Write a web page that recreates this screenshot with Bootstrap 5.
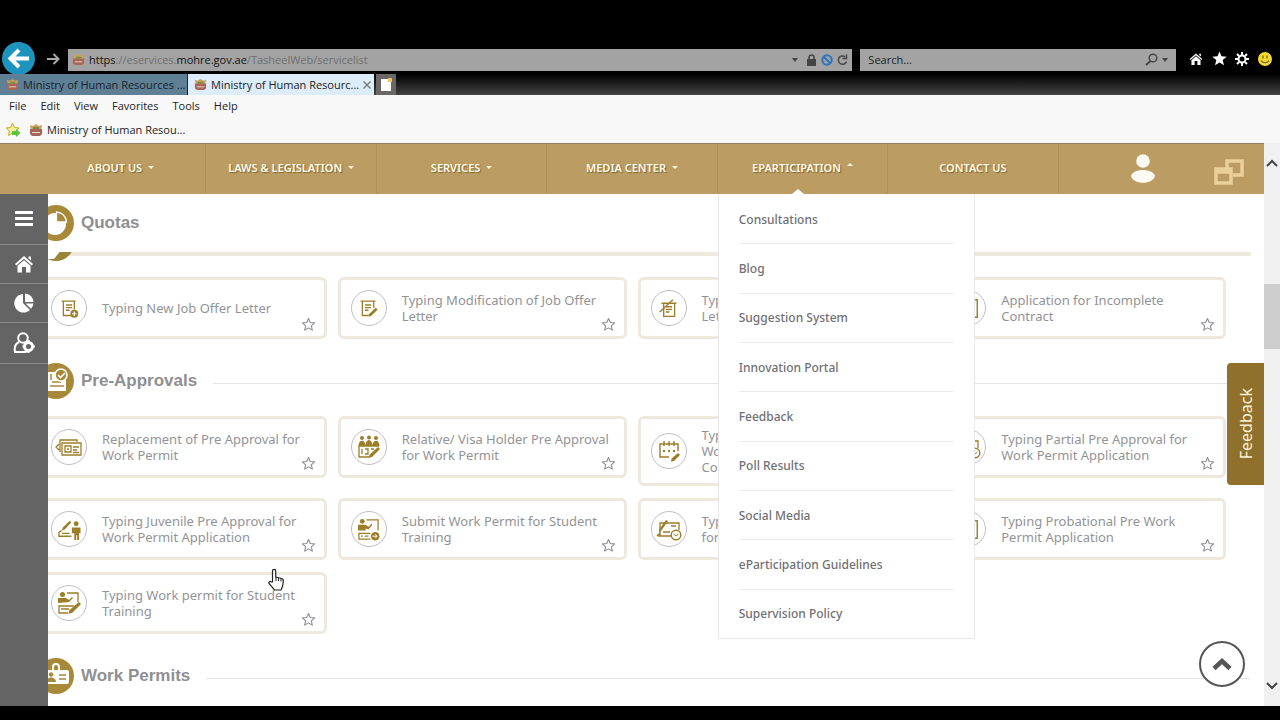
<!DOCTYPE html>
<html lang="en">
<head>
<meta charset="utf-8">
<meta name="viewport" content="width=device-width, initial-scale=1">
<title>Ministry of Human Resources - Service list</title>
<link rel="stylesheet" href="https://cdn.jsdelivr.net/npm/bootstrap@5.3.0/dist/css/bootstrap.min.css">
<script src="https://cdn.jsdelivr.net/npm/bootstrap@5.3.0/dist/js/bootstrap.bundle.min.js"></script>
<style>
  :root { --gold: #bb9c63; --deep: #8f702c; --icon: #9c7d28; --line: #eee8dd; }
  body { background: #000; font-family: "Noto Sans", sans-serif; font-size: 13px; padding: 43px 0 14px; }
  a { text-decoration: none; color: inherit; }
  button { font: inherit; color: inherit; background: none; border: 0; padding: 0; }
  svg { flex: none; display: block; }

  /* browser frame */
  .chrome { font-family: "Open Sans", sans-serif; font-size: 11px; line-height: 16px; }
  .addr-row { height: 31px; padding-left: 2px; }
  .field { background: #a3a3a3; color: #6f6f6f; height: 22px; margin-top: 2px; }
  .field b { color: #111; font-weight: 400; }
  .field-find { width: 24.7%; flex: none; }
  .field input { background: none; border: 0; outline: 0; color: #222; min-width: 0; }
  .field input::placeholder { color: #222; opacity: 1; }
  .tools { width: 104px; padding: 0 8px 0 13px; color: #fff; flex: none; }
  .tab-row { height: 21px; background: linear-gradient(#000, #444); }
  .b-tab { width: 187px; padding: 0 6px; background: #5f7f94; color: #14222e; }
  .b-tab.current { background: #dcecf9; color: #222; }
  .new-tab { width: 20px; background: #6b6767; margin-left: 2px; }
  .menu-row { height: 22px; padding-left: 9px; gap: 14px; }
  .fav-row { height: 26px; padding-left: 5px; gap: 8px; }
  .light { background: #f8f8f8; color: #222; }

  /* site bar */
  .site-bar { background: var(--gold); border-top: 1px solid #8d8064; height: 51px; padding-left: 36px; z-index: 5; }
  .site-item { flex: 0 0 13.88%; border-right: 1px solid #b0915a; position: relative; }
  .site-link { color: #fffbe9; font-size: 11px; font-weight: 600; line-height: 16px; text-shadow: 1px 1px 1px #7d6434; gap: 6px; height: 48px; }
  .site-tools { padding: 6px 20px 0 0; gap: 59px; }
  .tri { border: 3px solid transparent; border-width: 3px 3px 0; border-top-color: #fff3cf; margin-bottom: 2px; }
  .tri.up { border-width: 0 3px 3px; border-top-color: transparent; border-bottom-color: #fff3cf; margin-bottom: 7px; }
  .mega { position: absolute; top: 100%; left: 0; width: 257px; height: 445px; background: #fff; padding: 1px 20px 0; border: 1px solid #e8e8e8; border-top: 0; }
  .mega::before { content: ""; position: absolute; left: 73px; top: -5px; border: 6px solid transparent; border-width: 0 6px 5px; border-bottom-color: #fff; }
  .mega a { flex: 1 1 0; padding-top: 1px; border-bottom: 1px solid #ececec; color: #707074; font-size: 12px; font-weight: 500; }
  .mega a:last-child { border: 0; }

  /* left rail */
  .rail { flex: 0 0 48px; background: #646464; color: #fff; z-index: 3; }
  .rail button { height: 39px; border-bottom: 1px solid #8c8c8c; }
  .rail button:first-child { height: 51px; }
  .rail button:last-child { height: 41px; }

  /* services */
  .services { margin-left: -10px; min-width: 0; background: #fff; }
  .pinned { height: 62px; background: #fff; border-bottom: 4px solid var(--line); margin: 0 13px 21px 0; }
  .pinned-in { height: 57px; gap: 7px; }
  .sec-title { font: bold 17px/24px "Liberation Sans", sans-serif; color: #8f8f92; margin: 0; }
  .sec-head { height: 36px; margin: 24px 14px 17px 0; gap: 7px; }
  .sec-head hr { margin: 4px 0 0 9px; border-color: #e4e4e4; }
  .tiles { display: grid; grid-template-columns: repeat(4, 1fr); gap: 12px 11px; align-items: start; margin-right: 38px; }
  .tile { position: relative; min-height: 62px; border: 3px solid var(--line); border-radius: 6px; padding: 8px 8px 8px 10px; gap: 15px; line-height: 16px; color: #939397; }
  .ring { width: 36px; height: 36px; border: 1px solid #bfbcc8; border-radius: 50%; color: var(--icon); flex: none; }
  .star { position: absolute; right: 8px; bottom: 4px; color: #8e8e96; }
  .badge-peek { position: absolute; left: 0; top: 58px; width: 36px; height: 9px; overflow: hidden; }

  .feedback { position: absolute; right: 0; top: 169px; width: 37px; height: 122px; background: var(--deep); color: #fbf0d4; border-radius: 4px 0 0 4px; font-size: 16px; }
  .feedback span { writing-mode: vertical-rl; transform: rotate(180deg); }
  .to-top { position: absolute; right: 19px; bottom: 19px; width: 46px; height: 46px; border: 2px solid #555; border-radius: 50%; background: #fff; color: #555; }
  .pointer { position: absolute; left: 267px; top: 374px; z-index: 4; }
  .scroll-track { flex: 0 0 16px; background: #f0f0f0; color: #444; padding: 16px 0; }
  .scroll-thumb { height: 65px; background: #cdcdcd; margin-top: 117px; }
</style>
</head>
<body class="d-flex flex-column min-vh-100">

<svg width="0" height="0" class="position-absolute" aria-hidden="true">
  <defs>
    <symbol id="crest" viewBox="0 0 14 14"><path d="M1 2l3 1 3-2 3 2 3-1-1 5H2z" fill="#c9a05a"/><path d="M1 6h12v5l-2 2H3l-2-2z" fill="#a8665a"/><path d="M4 4h6v2H4z" fill="#7c8a4e"/><path d="M3 9h8v1H3z" fill="#e9d9c9"/></symbol>
    <symbol id="star" viewBox="0 0 16 16"><path d="M8 1.600l1.900 4.300 4.600.4-3.500 3.100 1.100 4.600L8 11.600 3.900 14l1.100-4.600L1.500 6.300l4.600-.4z" fill="none" stroke="currentColor" stroke-width="1.200" stroke-linejoin="round"/></symbol>
    <symbol id="home" viewBox="0 0 20 18"><path d="M10 1l9 8-1.300 1.400L10 3.700l-7.700 6.700L1 9zM14.500 1.500H17v4l-2.500-2.200zM10 5.200l6.500 5.600V17.500H12V12H8v5.500H3.500v-6.700z" fill="currentColor"/></symbol>
    <symbol id="doc-add" viewBox="0 0 24 24"><path d="M3 3.500h16M5 3.500V20h9M17.500 3.500V13M8 8h7M8 11h7M8 14h4" fill="none" stroke="currentColor" stroke-width="1.500"/><circle cx="17.500" cy="18" r="4.500" fill="currentColor"/><path d="M17.500 15.500v5M15 18h5" stroke="#fff" stroke-width="1.400"/></symbol>
    <symbol id="doc-edit" viewBox="0 0 24 24"><path d="M3 3.500h17M5 3.500V20h7M18 3.500V11M8 8h7M8 11h7M8 14h4" fill="none" stroke="currentColor" stroke-width="1.500"/><path d="M20 11l2.500 2.200-7.500 7.500-3 .8.500-3z" fill="currentColor"/></symbol>
    <symbol id="doc-off" viewBox="0 0 24 24"><path d="M4 6h17M6.500 6v15H19V6M9 10h7M9 13h7M9 16h4" fill="none" stroke="currentColor" stroke-width="1.500"/><path d="M2 16L17 2" stroke="currentColor" stroke-width="1.500"/></symbol>
    <symbol id="cards" viewBox="0 0 28 24"><path d="M5 17V5h17v2M7 8h19v12H7zM10 11h6v6h-6zM12 14h2M18 12h6M18 15h4M18 17.500h6M4 9l-3 3 3 3" fill="none" stroke="currentColor" stroke-width="1.300"/></symbol>
    <symbol id="family" viewBox="0 0 24 24"><g fill="currentColor"><circle cx="5" cy="3" r="2"/><circle cx="12" cy="2.500" r="2"/><circle cx="19" cy="3" r="2"/><path d="M1.500 11c0-7 7-7 7 0zM8.500 11c0-8 7-8 7 0zM15.500 11c0-7 7-7 7 0zM21 12l2 2-8 8-3 .5.600-3z"/></g><path d="M13 22H2V11h20M5 14v5M8 14h3v5H8M14 14h3" fill="none" stroke="currentColor" stroke-width="1.300"/></symbol>
    <symbol id="calendar" viewBox="0 0 24 24"><path d="M12 18H3V5h18v7M7 2v5M12 2v5M17 2v5" fill="none" stroke="currentColor" stroke-width="1.400"/><path d="M6 11h2v2H6zM11 11h2v2h-2zM16 11h2v2h-2zM21 14l2 2-6 6-3 .6.600-3z" fill="currentColor"/></symbol>
    <symbol id="juvenile" viewBox="0 0 24 24"><g fill="currentColor"><circle cx="19" cy="6" r="2.500"/><path d="M14.500 10h9v6H22v7h-2v-5h-1v5h-2v-7h-2.500zM12 3l2 1.500L7 12l-3 1 1-3z"/></g><path d="M4 13L1 15v4h13M4 16h8" fill="none" stroke="currentColor" stroke-width="1.400"/></symbol>
    <symbol id="training" viewBox="0 0 24 24"><g fill="currentColor"><circle cx="5.500" cy="3.500" r="2.500"/><path d="M1 13V7h8l3 2 3-3 1 1-4 5-3-1v2z"/><circle cx="19" cy="19" r="4.500"/></g><path d="M10 2h12v11M14 22H2v-6h12M4 19h2M8 19h4" fill="none" stroke="currentColor" stroke-width="1.300"/><path d="M16 19h5M19 17l2 2-2 2" fill="none" stroke="#fff"/></symbol>
    <symbol id="time-card" viewBox="0 0 26 24"><path d="M16 19H4V6h19v7M7 15h7M15 9h5M2 19h14M1 19l3-3" fill="none" stroke="currentColor" stroke-width="1.300"/><path d="M10 3l2 1-7 10-2 1v-2.500z" fill="currentColor"/><circle cx="20" cy="18" r="4.800" fill="#fff" stroke="currentColor" stroke-width="1.400"/><path d="M17.500 17l2.500 2 2.500-2" fill="none" stroke="currentColor"/></symbol>
    <symbol id="train-edit" viewBox="0 0 24 24"><g fill="currentColor"><circle cx="5.500" cy="3.500" r="2.500"/><path d="M1 12V7h8l3 2 3-3 1 1-4 4zM22 11l2 2-9 9-3.500.7.700-3.500z"/></g><path d="M10 2h11v9M11 22H2v-7h15M4 18h8" fill="none" stroke="currentColor" stroke-width="1.300"/></symbol>
    <symbol id="contract" viewBox="0 0 24 24"><path d="M4 2h18v20H4zM8 8h8M8 12h8" fill="none" stroke="currentColor" stroke-width="1.600"/></symbol>
  </defs>
</svg>

<header class="chrome">
  <div class="addr-row d-flex align-items-center">
    <button aria-label="Back"><svg width="33" height="33" viewBox="0 0 33 33"><circle cx="16.500" cy="16.500" r="16.500" fill="#1e93bd"/><path d="M17 8l-8.500 8.500L17 25M9 16.500h18" fill="none" stroke="#fff" stroke-width="4"/></svg></button>
    <button aria-label="Forward" class="ms-2 ps-1"><svg width="13" height="12" viewBox="0 0 13 12"><path d="M0 6h11M6.500 1l5 5-5 5" fill="none" stroke="#aaa" stroke-width="2"/></svg></button>
    <div class="field flex-fill d-flex align-items-center ms-2 me-2 ps-1 pe-1">
      <svg width="13" height="13" class="me-1"><use href="#crest"/></svg>
      <div class="flex-fill" role="textbox" aria-label="Address" contenteditable="true"><b>https</b>://eservices.<b>mohre.gov.ae</b>/TasheelWeb/servicelist</div>
      <div class="d-flex align-items-center gap-1">
        <svg width="6" height="4" class="me-1"><path d="M0 0h6L3 4z" fill="#444"/></svg>
        <svg width="11" height="12" viewBox="0 0 11 12"><path d="M1 5h9v7H1z" fill="#444"/><path d="M3 6V3.500a2.500 2.500 0 015 0V6" fill="none" stroke="#444" stroke-width="1.500"/></svg>
        <svg width="12" height="12" viewBox="0 0 12 12"><circle cx="6" cy="6" r="4.700" fill="none" stroke="#2e74bd" stroke-width="2"/><path d="M3 3l6 6" stroke="#2e74bd" stroke-width="2"/></svg>
        <svg width="11" height="12" viewBox="0 0 11 12"><path d="M9.500 7.500A4.200 4.200 0 118 2.700M5.500 4.500h4v-4" fill="none" stroke="#444" stroke-width="1.500"/></svg>
      </div>
    </div>
    <label class="field field-find d-flex align-items-center ps-2 pe-2">
      <input class="flex-fill p-0" type="search" placeholder="Search..." aria-label="Search">
      <svg width="13" height="13" viewBox="0 0 13 13"><circle cx="8" cy="5" r="3.800" fill="none" stroke="#444" stroke-width="1.400"/><path d="M5.500 8L1 12" stroke="#444" stroke-width="1.800"/></svg>
      <svg width="6" height="4" class="ms-1"><path d="M0 0h6L3 4z" fill="#444"/></svg>
    </label>
    <div class="tools d-flex align-items-center justify-content-between">
      <button aria-label="Home"><svg width="14" height="14"><use href="#home"/></svg></button>
      <button aria-label="Favorites"><svg width="15" height="15" viewBox="0 0 16 16"><path d="M8 .5l2.100 5.200 5.600.4-4.300 3.600 1.400 5.500L8 12.200l-4.800 3 1.400-5.500L.3 6.100l5.600-.4z" fill="#fff"/></svg></button>
      <button aria-label="Settings"><svg width="14" height="14" viewBox="0 0 14 14"><circle cx="7" cy="7" r="3.500" fill="none" stroke="#fff" stroke-width="2"/><g stroke="#fff" stroke-width="2"><path d="M7 0v3M7 11v3M0 7h3M11 7h3M2 2l2 2M10 10l2 2M12 2l-2 2M4 10l-2 2"/></g></svg></button>
      <button aria-label="Smile"><svg width="14" height="14" viewBox="0 0 14 14"><circle cx="7" cy="7" r="7" fill="#f3d92d"/><path d="M5 3.500v3M9 3.500v3M3 8.500c2 3 6 3 8 0" fill="none" stroke="#6a5a10" stroke-width="1.200"/></svg></button>
    </div>
  </div>

  <div class="tab-row d-flex">
    <button class="b-tab d-flex align-items-center gap-1"><svg width="13" height="13"><use href="#crest"/></svg><span class="text-nowrap">Ministry of Human Resources ...</span></button>
    <button class="b-tab current d-flex align-items-center gap-1 border-start border-dark"><svg width="13" height="13"><use href="#crest"/></svg><span class="text-nowrap">Ministry of Human Resourc...</span>
      <svg width="8" height="8" viewBox="0 0 8 8" class="ms-auto"><path d="M.5.500l7 7M7.500.500l-7 7" stroke="#777" stroke-width="1.400"/></svg></button>
    <button class="new-tab d-flex align-items-center justify-content-center" aria-label="New tab"><svg width="14" height="15" viewBox="0 0 14 15"><path d="M2 2h7l3 3v9H2z" fill="#fff"/><path d="M9 1h4v4H9z" fill="#e9c35c"/></svg></button>
  </div>

  <nav class="menu-row light d-flex align-items-center" aria-label="Browser menu">
    <a href="#">File</a><a href="#">Edit</a><a href="#">View</a><a href="#">Favorites</a><a href="#">Tools</a><a href="#">Help</a>
  </nav>
  <div class="fav-row light d-flex align-items-center">
    <svg width="16" height="16" viewBox="0 0 16 16"><path d="M7.500 1l2 4.500 4.500.5-3.500 3 1 4.500-4-2.500-4 2.500 1-4.500L1 6l4.500-.5z" fill="#f6ee9a" stroke="#c5ac25"/><path d="M7 9h4V7l4.500 4L11 15v-2H7z" fill="#5cc33c"/></svg>
    <a href="#" class="d-flex align-items-center gap-1"><svg width="14" height="14"><use href="#crest"/></svg>Ministry of Human Resou...</a>
  </div>
</header>

<div class="d-flex flex-fill bg-white">
  <div class="flex-fill d-flex flex-column position-relative overflow-hidden">
    <nav class="site-bar d-flex position-relative" aria-label="Main">
      <div class="site-item"><a href="#" class="site-link d-flex align-items-center justify-content-center">ABOUT US <span class="tri"></span></a></div>
      <div class="site-item"><a href="#" class="site-link d-flex align-items-center justify-content-center">LAWS &amp; LEGISLATION <span class="tri"></span></a></div>
      <div class="site-item"><a href="#" class="site-link d-flex align-items-center justify-content-center">SERVICES <span class="tri"></span></a></div>
      <div class="site-item"><a href="#" class="site-link d-flex align-items-center justify-content-center">MEDIA CENTER <span class="tri"></span></a></div>
      <div class="site-item"><a href="#" class="site-link d-flex align-items-center justify-content-center" aria-expanded="true">EPARTICIPATION <span class="tri up"></span></a>
        <div class="mega d-flex flex-column">
          <a href="#" class="d-flex align-items-center">Consultations</a>
          <a href="#" class="d-flex align-items-center">Blog</a>
          <a href="#" class="d-flex align-items-center">Suggestion System</a>
          <a href="#" class="d-flex align-items-center">Innovation Portal</a>
          <a href="#" class="d-flex align-items-center">Feedback</a>
          <a href="#" class="d-flex align-items-center">Poll Results</a>
          <a href="#" class="d-flex align-items-center">Social Media</a>
          <a href="#" class="d-flex align-items-center">eParticipation Guidelines</a>
          <a href="#" class="d-flex align-items-center">Supervision Policy</a>
        </div>
      </div>
      <div class="site-item"><a href="#" class="site-link d-flex align-items-center justify-content-center">CONTACT US</a></div>
      <div class="site-tools flex-fill d-flex align-items-center justify-content-end">
        <button class="pb-2" aria-label="Account"><svg width="24" height="29" viewBox="0 0 24 29"><circle cx="12" cy="7" r="6.800" fill="#fdfaf3"/><path d="M0 22c2-8 22-8 24 0-2 9-22 9-24 0z" fill="#fdfaf3"/></svg></button>
        <button aria-label="Windows"><svg width="30" height="27" viewBox="0 0 30 27"><path d="M13 9V2h15v14h-9" fill="none" stroke="#ecd09a" stroke-width="3.500"/><path d="M2 10h15v14H2zM2 13h15" fill="none" stroke="#ecd09a" stroke-width="3.500"/></svg></button>
      </div>
    </nav>

    <div class="d-flex flex-fill position-relative">
      <aside class="rail d-flex flex-column">
        <button class="d-flex align-items-center justify-content-center" aria-label="Menu"><svg width="18" height="16"><path d="M0 0h18v3H0zM0 6h18v3H0zM0 12h18v3H0z" fill="#fff"/></svg></button>
        <button class="d-flex align-items-center justify-content-center" aria-label="Home"><svg width="20" height="18"><use href="#home"/></svg></button>
        <button class="d-flex align-items-center justify-content-center" aria-label="Reports"><svg width="20" height="20" viewBox="0 0 20 20"><path d="M9 1v9l7 7A9.300 9.300 0 119 1z" fill="#fff"/><path d="M11 .5a9 9 0 018.500 8.500H11zM11.500 10.500h8a9 9 0 01-2.500 5.200z" fill="#fff"/></svg></button>
        <button class="d-flex align-items-center justify-content-center" aria-label="Account settings"><svg width="22" height="22" viewBox="0 0 22 22"><circle cx="10" cy="6" r="4.800" fill="none" stroke="#fff" stroke-width="2"/><path d="M6 10c-4 2-5 5-4 10h10l4-1" fill="none" stroke="#fff" stroke-width="2"/><circle cx="15.500" cy="14.500" r="4" fill="none" stroke="#fff" stroke-width="3"/><path d="M15.500 8v3M15.500 18v3M9.500 14.500h3M19 14.500h3" stroke="#fff" stroke-width="2"/></svg></button>
      </aside>

      <main class="services flex-fill">
        <div class="pinned position-relative">
          <div class="pinned-in d-flex align-items-center">
            <svg width="36" height="36" viewBox="0 0 36 36"><circle cx="18" cy="18" r="18" fill="#a8893a"/><circle cx="17" cy="19" r="11" fill="#fff"/><path d="M18.500 7v10h10A10.500 10.500 0 0018.500 7z" fill="#a8893a" stroke="#fff" stroke-width="1.300"/></svg>
            <h2 class="sec-title">Quotas</h2>
          </div>
          <div class="badge-peek"><svg width="36" height="9" viewBox="0 27 36 9"><circle cx="18" cy="18" r="18" fill="#97863a"/><path d="M0 24h24l-8 10H0z" fill="#fff"/></svg></div>
        </div>

        <div class="tiles">
          <a href="#" class="tile d-flex align-items-center"><span class="ring d-flex align-items-center justify-content-center"><svg width="21" height="21"><use href="#doc-add"/></svg></span><span>Typing New Job Offer Letter</span><svg class="star" width="15" height="15"><use href="#star"/></svg></a>
          <a href="#" class="tile d-flex align-items-center"><span class="ring d-flex align-items-center justify-content-center"><svg width="21" height="21"><use href="#doc-edit"/></svg></span><span>Typing Modification of Job Offer Letter</span><svg class="star" width="15" height="15"><use href="#star"/></svg></a>
          <a href="#" class="tile d-flex align-items-center"><span class="ring d-flex align-items-center justify-content-center"><svg width="21" height="21"><use href="#doc-off"/></svg></span><span>Type<br>Let</span><svg class="star" width="15" height="15"><use href="#star"/></svg></a>
          <a href="#" class="tile d-flex align-items-center"><span class="ring d-flex align-items-center justify-content-center"><svg width="21" height="21"><use href="#contract"/></svg></span><span>Application for Incomplete<br>Contract</span><svg class="star" width="15" height="15"><use href="#star"/></svg></a>
        </div>

        <div class="sec-head d-flex align-items-center">
          <svg width="36" height="36" viewBox="0 0 36 36"><circle cx="18" cy="18" r="18" fill="#a8893a"/><path d="M8 9h11v6h9v13H8z" fill="#fff"/><path d="M14 19h9M12 23h14M13 11v6" stroke="#a8893a" stroke-width="1.500"/><circle cx="23" cy="12" r="6" fill="#a8893a" stroke="#fff" stroke-width="1.600"/><path d="M20 12l2.500 2.500L27 10" fill="none" stroke="#fff" stroke-width="1.600"/></svg>
          <h2 class="sec-title">Pre-Approvals</h2><hr class="flex-fill opacity-100">
        </div>

        <div class="tiles">
          <a href="#" class="tile d-flex align-items-center"><span class="ring d-flex align-items-center justify-content-center"><svg width="28" height="24"><use href="#cards"/></svg></span><span>Replacement of Pre Approval for Work Permit</span><svg class="star" width="15" height="15"><use href="#star"/></svg></a>
          <a href="#" class="tile d-flex align-items-center"><span class="ring d-flex align-items-center justify-content-center"><svg width="24" height="24"><use href="#family"/></svg></span><span>Relative/ Visa Holder Pre Approval for Work Permit</span><svg class="star" width="15" height="15"><use href="#star"/></svg></a>
          <a href="#" class="tile d-flex align-items-center"><span class="ring d-flex align-items-center justify-content-center"><svg width="24" height="24"><use href="#calendar"/></svg></span><span>Type<br>Work<br>Con</span><svg class="star" width="15" height="15"><use href="#star"/></svg></a>
          <a href="#" class="tile d-flex align-items-center"><span class="ring d-flex align-items-center justify-content-center"><svg width="26" height="24"><use href="#time-card"/></svg></span><span>Typing Partial Pre Approval for Work Permit Application</span><svg class="star" width="15" height="15"><use href="#star"/></svg></a>
          <a href="#" class="tile d-flex align-items-center"><span class="ring d-flex align-items-center justify-content-center"><svg width="23" height="23"><use href="#juvenile"/></svg></span><span>Typing Juvenile Pre Approval for Work Permit Application</span><svg class="star" width="15" height="15"><use href="#star"/></svg></a>
          <a href="#" class="tile d-flex align-items-center"><span class="ring d-flex align-items-center justify-content-center"><svg width="23" height="23"><use href="#training"/></svg></span><span>Submit Work Permit for Student Training</span><svg class="star" width="15" height="15"><use href="#star"/></svg></a>
          <a href="#" class="tile d-flex align-items-center"><span class="ring d-flex align-items-center justify-content-center"><svg width="28" height="24"><use href="#time-card"/></svg></span><span>Type<br>for</span><svg class="star" width="15" height="15"><use href="#star"/></svg></a>
          <a href="#" class="tile d-flex align-items-center"><span class="ring d-flex align-items-center justify-content-center"><svg width="21" height="21"><use href="#contract"/></svg></span><span>Typing Probational Pre Work<br>Permit Application</span><svg class="star" width="15" height="15"><use href="#star"/></svg></a>
          <a href="#" class="tile d-flex align-items-center"><span class="ring d-flex align-items-center justify-content-center"><svg width="24" height="24"><use href="#train-edit"/></svg></span><span>Typing Work permit for Student Training</span><svg class="star" width="15" height="15"><use href="#star"/></svg></a>
        </div>

        <div class="sec-head d-flex align-items-center mb-0">
          <svg width="36" height="36" viewBox="0 0 36 36"><circle cx="18" cy="18" r="18" fill="#a8893a"/><rect x="5" y="12" width="26" height="14" rx="2" fill="#fff"/><path d="M15 13V9a3 3 0 016 0v4" fill="none" stroke="#fff" stroke-width="2"/><path d="M21 17h7M21 21h7" stroke="#a8893a" stroke-width="1.500"/><circle cx="13" cy="16.500" r="2.200" fill="#a8893a"/><path d="M8 24c0-6 10-6 10 0z" fill="#a8893a"/></svg>
          <h2 class="sec-title">Work Permits</h2><hr class="flex-fill opacity-100">
        </div>
      </main>

      <button class="feedback d-flex align-items-center justify-content-center"><span>Feedback</span></button>
      <button class="to-top d-flex align-items-center justify-content-center" aria-label="Back to top"><svg width="20" height="14" viewBox="0 0 20 14"><path d="M2 11.500L10 4l8 7.500" fill="none" stroke="currentColor" stroke-width="4.500"/></svg></button>
      <svg class="pointer" width="18" height="24" viewBox="0 0 18 24"><path d="M5.500 14V3a1.600 1.600 0 013.200 0v6l6 1.500c1.500.5 1.800 1.500 1.600 3l-.8 5-1.500 3.500H7.500L2 15.500c-.8-1.500 1-2.800 2.200-1.500z" fill="#fff" stroke="#222" stroke-width="1.200"/><path d="M9 9v4M11.500 10v3M14 10.500v3" stroke="#222"/></svg>
    </div>
  </div>
  <div class="scroll-track d-flex flex-column align-items-center" aria-hidden="true">
    <svg width="12" height="8" viewBox="0 0 12 8"><path d="M1 7l5-5 5 5" fill="none" stroke="#444" stroke-width="2"/></svg>
    <div class="scroll-thumb w-100"></div>
    <svg class="mt-auto" width="12" height="8" viewBox="0 0 12 8"><path d="M1 1l5 5 5-5" fill="none" stroke="#444" stroke-width="2"/></svg>
  </div>
</div>
</body>
</html>
